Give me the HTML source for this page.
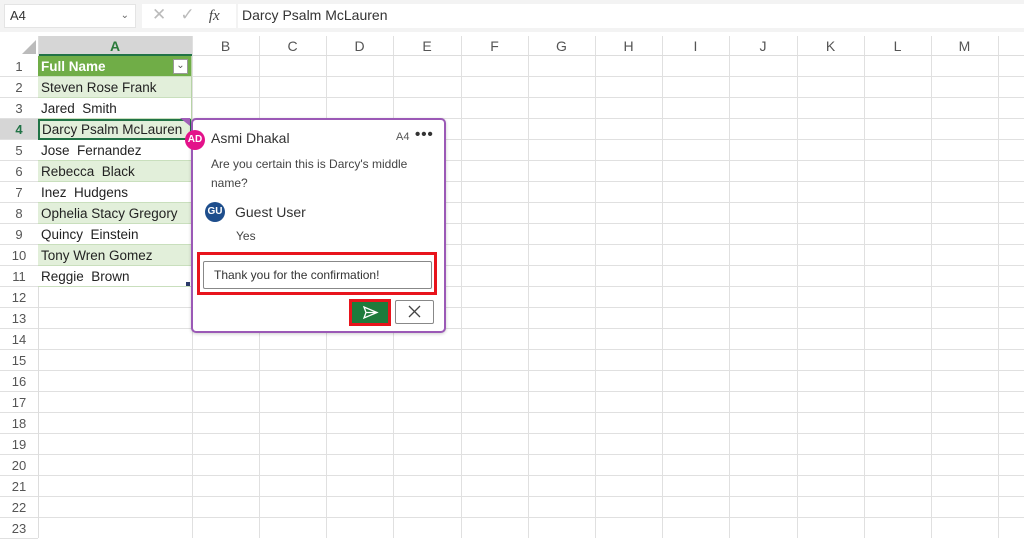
<!DOCTYPE html>
<html><head><style>
*{margin:0;padding:0;box-sizing:border-box}
body{width:1024px;height:538px;overflow:hidden;background:#fff;font-family:"Liberation Sans",sans-serif;position:relative}
.abs{position:absolute}
#top{left:0;top:0;width:1024px;height:32px;background:#f3f3f3}
#grid{left:38px;top:56px;width:986px;height:482px;
background-image:linear-gradient(to bottom,#e0e0e0 1px,transparent 1px);
background-size:100% 21px;background-position:0 20px}
.vl{top:36px;width:1px;height:502px;background:#e0e0e0}
.ch{top:36px;height:20px;font-size:14px;color:#555;text-align:center;line-height:20px}
.rh{left:0;width:38px;height:21px;font-size:13px;color:#555;text-align:center;line-height:21px;background:#fff;border-bottom:1px solid #e0e0e0}
.c{left:38px;width:154px;height:21px;font-size:13.5px;color:#222;padding-left:3px;line-height:21px;border-bottom:1px solid #c9dfbd}
</style></head><body>
<div class="abs" id="top"></div>
<div class="abs" style="left:4px;top:4px;width:132px;height:24px;background:#fff;border:1px solid #e4e4e4;font-size:13px;color:#333;padding-left:5px;line-height:22px">A4<span style="position:absolute;right:6px;font-size:10px;color:#666">⌄</span></div>
<div class="abs" style="left:142px;top:4px;width:94px;height:24px;background:#fff;font-size:17px;color:#bbb;line-height:22px;padding-left:10px">✕&nbsp;&nbsp;&nbsp;✓&nbsp;&nbsp;&nbsp;<i style="color:#444;font-family:'Liberation Serif';font-size:15px">fx</i></div>
<div class="abs" style="left:238px;top:4px;width:786px;height:24px;background:#fff;font-size:14px;color:#333;line-height:22px;padding-left:4px">Darcy Psalm McLauren</div>
<div class="abs" id="grid"></div>
<div class="abs vl" style="left:192px"></div><div class="abs vl" style="left:259px"></div><div class="abs vl" style="left:326px"></div><div class="abs vl" style="left:393px"></div><div class="abs vl" style="left:461px"></div><div class="abs vl" style="left:528px"></div><div class="abs vl" style="left:595px"></div><div class="abs vl" style="left:662px"></div><div class="abs vl" style="left:729px"></div><div class="abs vl" style="left:797px"></div><div class="abs vl" style="left:864px"></div><div class="abs vl" style="left:931px"></div><div class="abs vl" style="left:998px"></div>
<div class="abs" style="left:0;top:55px;width:1024px;height:1px;background:#ddd"></div>
<div class="abs" style="left:0;top:36px;width:38px;height:20px;background:#fff"><svg width="38" height="20"><polygon points="36,4 36,18 22,18" fill="#bbb"/></svg></div>
<div class="abs ch" style="left:38px;width:154px;background:#d6d6d6;color:#2a7a3a;font-weight:bold;border-bottom:2px solid #217346">A</div>
<div class="abs ch" style="left:192px;width:67px">B</div><div class="abs ch" style="left:259px;width:67px">C</div><div class="abs ch" style="left:326px;width:67px">D</div><div class="abs ch" style="left:393px;width:68px">E</div><div class="abs ch" style="left:461px;width:67px">F</div><div class="abs ch" style="left:528px;width:67px">G</div><div class="abs ch" style="left:595px;width:67px">H</div><div class="abs ch" style="left:662px;width:67px">I</div><div class="abs ch" style="left:729px;width:68px">J</div><div class="abs ch" style="left:797px;width:67px">K</div><div class="abs ch" style="left:864px;width:67px">L</div><div class="abs ch" style="left:931px;width:67px">M</div>
<div class="abs" style="left:38px;top:36px;width:1px;height:502px;background:#ddd"></div>
<div class="abs rh" style="top:56px">1</div><div class="abs rh" style="top:77px">2</div><div class="abs rh" style="top:98px">3</div><div class="abs rh" style="top:119px;background:#d6d6d6;color:#217346;font-weight:bold">4</div><div class="abs rh" style="top:140px">5</div><div class="abs rh" style="top:161px">6</div><div class="abs rh" style="top:182px">7</div><div class="abs rh" style="top:203px">8</div><div class="abs rh" style="top:224px">9</div><div class="abs rh" style="top:245px">10</div><div class="abs rh" style="top:266px">11</div><div class="abs rh" style="top:287px">12</div><div class="abs rh" style="top:308px">13</div><div class="abs rh" style="top:329px">14</div><div class="abs rh" style="top:350px">15</div><div class="abs rh" style="top:371px">16</div><div class="abs rh" style="top:392px">17</div><div class="abs rh" style="top:413px">18</div><div class="abs rh" style="top:434px">19</div><div class="abs rh" style="top:455px">20</div><div class="abs rh" style="top:476px">21</div><div class="abs rh" style="top:497px">22</div><div class="abs rh" style="top:518px">23</div>
<div class="abs c" style="top:56px;background:#70ad47;color:#fff;font-weight:bold">Full Name<span style="position:absolute;right:4px;top:3px;width:15px;height:15px;background:#fff;border:1px solid #999;font-size:10px;color:#555;line-height:12px;text-align:center;font-weight:normal">⌄</span></div>
<div class="abs c" style="top:77px;background:#e2efda">Steven Rose Frank</div>
<div class="abs c" style="top:98px;background:#fff">Jared&nbsp; Smith</div>
<div class="abs c" style="top:119px;background:#e2efda;border:2px solid #217346;padding-left:2px;line-height:18px">Darcy Psalm McLauren</div>
<div class="abs c" style="top:140px;background:#fff">Jose&nbsp; Fernandez</div>
<div class="abs c" style="top:161px;background:#e2efda">Rebecca&nbsp; Black</div>
<div class="abs c" style="top:182px;background:#fff">Inez&nbsp; Hudgens</div>
<div class="abs c" style="top:203px;background:#e2efda">Ophelia Stacy Gregory</div>
<div class="abs c" style="top:224px;background:#fff">Quincy&nbsp; Einstein</div>
<div class="abs c" style="top:245px;background:#e2efda">Tony Wren Gomez</div>
<div class="abs c" style="top:266px;background:#fff">Reggie&nbsp; Brown</div>
<div class="abs" style="left:191px;top:56px;width:1px;height:231px;background:#b7d3a6"></div>
<div class="abs" style="left:186px;top:282px;width:4px;height:4px;background:#2b3a6a"></div>
<div class="abs" style="left:180px;top:118px;width:10px;height:8px;background:#a05fb8;clip-path:polygon(0 0,100% 0,100% 100%)"></div>
<div class="abs" style="left:191px;top:118px;width:255px;height:215px;background:#fff;border:2px solid #9b59b6;border-radius:5px;box-shadow:0 1px 3px rgba(0,0,0,.2)"></div>
<div class="abs" style="left:185px;top:130px;width:20px;height:20px;border-radius:50%;background:#e3128a;color:#fff;font-size:10px;font-weight:bold;text-align:center;line-height:20px">AD</div>
<div class="abs" style="left:211px;top:130px;font-size:14px;color:#333">Asmi Dhakal</div>
<div class="abs" style="left:396px;top:131px;font-size:11px;color:#555">A4</div>
<div class="abs" style="left:415px;top:126px;font-size:15px;color:#333;font-weight:bold;letter-spacing:1px">•••</div>
<div class="abs" style="left:211px;top:155px;width:225px;font-size:12px;color:#444;line-height:19px">Are you certain this is Darcy's middle name?</div>
<div class="abs" style="left:205px;top:202px;width:20px;height:20px;border-radius:50%;background:#1e4e8c;color:#fff;font-size:10px;font-weight:bold;text-align:center;line-height:20px">GU</div>
<div class="abs" style="left:235px;top:204px;font-size:14px;color:#333">Guest User</div>
<div class="abs" style="left:236px;top:229px;font-size:12px;color:#444">Yes</div>
<div class="abs" style="left:197px;top:252px;width:240px;height:43px;border:3px solid #e8141c"></div>
<div class="abs" style="left:203px;top:261px;width:229px;height:28px;border:1px solid #888;border-radius:2px;font-size:12px;color:#333;line-height:26px;padding-left:10px">Thank you for the confirmation!</div>
<div class="abs" style="left:349px;top:299px;width:42px;height:27px;border:3px solid #e8141c;background:#1e7b3c"><svg width="36" height="21" style="position:absolute;left:0;top:0"><path d="M12 5 L25 10.5 L12 16 L14 10.5 Z M14 10.5 H25" fill="none" stroke="#fff" stroke-width="1.3"/></svg></div>
<div class="abs" style="left:395px;top:300px;width:39px;height:24px;border:1px solid #888;border-radius:2px"><svg width="37" height="22"><path d="M13 5 L24 16 M24 5 L13 16" stroke="#444" stroke-width="1.3"/></svg></div>
</body></html>
